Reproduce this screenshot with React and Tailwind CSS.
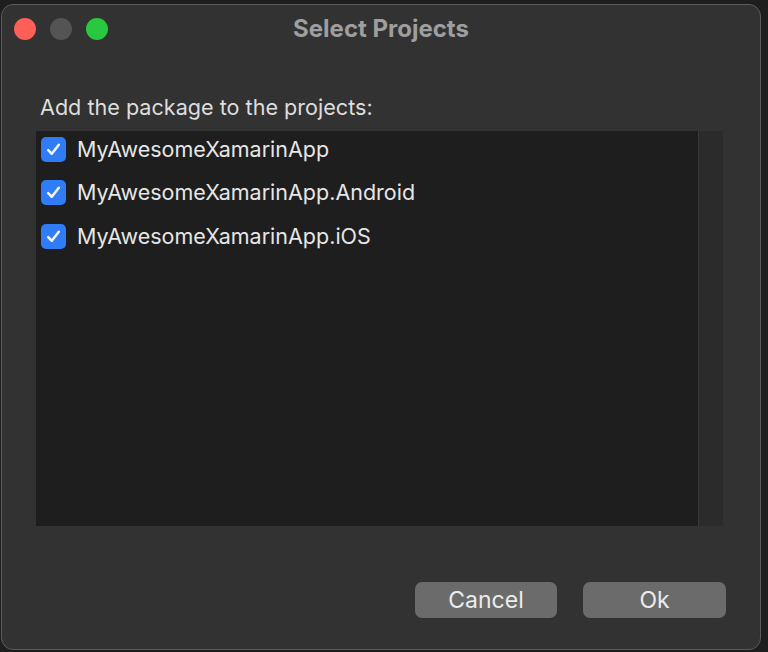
const projects = [
  "MyAwesomeXamarinApp",
  "MyAwesomeXamarinApp.Android",
  "MyAwesomeXamarinApp.iOS",
];

const CheckBox = () => (
  <div className="flex h-[25px] w-[25px] items-center justify-center rounded-[5px] bg-[#2f7cf6]">
    <svg width="17" height="17" viewBox="0 0 16 16" fill="none">
      <path
        d="M3 8.6 L6.4 12 L13 3.6"
        stroke="#f4f4f4"
        strokeWidth="2.4"
        strokeLinecap="round"
        strokeLinejoin="round"
      />
    </svg>
  </div>
);

const App = () => {
  return (
    <div
      className="h-[652px] w-[768px] overflow-hidden bg-[#1e1e1e] pl-[1px] pt-[4px]"
      style={{ fontFamily: 'Inter, "Liberation Sans", Arial, sans-serif' }}
    >
      <div className="flex h-[646px] w-[760px] flex-col rounded-[12px] border border-[#5a5a5a] bg-[#323232]">
        {/* title bar */}
        <div className="grid h-[48px] grid-cols-[1fr_auto_1fr] items-center">
          <div className="flex items-center gap-[14px] pl-[12px]">
            <span className="h-[22px] w-[22px] rounded-full bg-[#fe5f57]" />
            <span className="h-[22px] w-[22px] rounded-full bg-[#545454]" />
            <span className="h-[22px] w-[22px] rounded-full bg-[#28c840]" />
          </div>
          <div className="text-[24px] font-bold text-[#9e9e9e]">Select Projects</div>
          <div />
        </div>

        <div className="pl-[38px] pt-[40px] text-[21.6px] leading-[28px] text-[#dedede]">
          Add the package to the projects:
        </div>

        <div className="ml-[34px] mt-[10px] flex h-[395px] w-[687px]">
          <div className="flex flex-1 flex-col gap-[7.5px] bg-[#1e1e1e]">
            {projects.map((p) => (
              <div key={p} className="flex h-[36px] items-center gap-[11px] pl-[5px]">
                <CheckBox />
                <span className="text-[21.5px] text-[#e6e6e6]">{p}</span>
              </div>
            ))}
          </div>
          <div className="w-[25px] border-l border-[#3a3a3a] bg-[#2b2b2b]" />
        </div>

        <div className="mt-[56px] flex justify-end gap-[26px] pr-[34px]">
          <button className="h-[36px] w-[142px] rounded-[7px] bg-[#6b6b6b] text-[23px] text-[#ececec]">
            Cancel
          </button>
          <button className="h-[36px] w-[143px] rounded-[7px] bg-[#6b6b6b] text-[23px] text-[#ececec]">
            Ok
          </button>
        </div>
      </div>
    </div>
  );
};

export default App;
